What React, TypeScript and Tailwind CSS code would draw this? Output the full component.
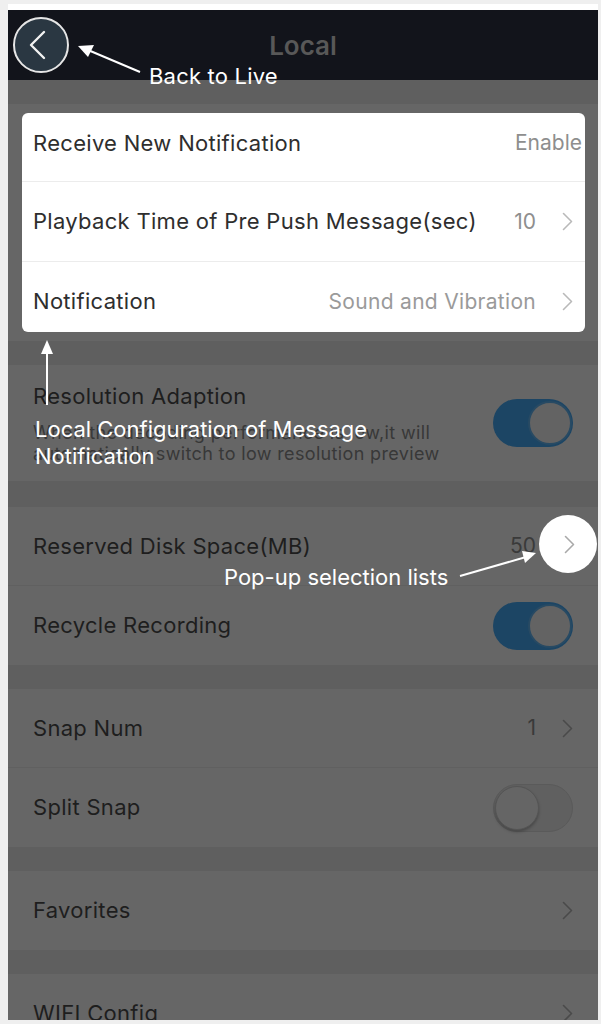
import React from "react";

const Chevron = ({ color = "#4a4a4a" }: { color?: string }) => (
  <svg width="11" height="19" viewBox="0 0 11 19" fill="none">
    <path d="M1.5 1.5 L9.5 9.5 L1.5 17.5" stroke={color} strokeWidth="1.6" strokeLinecap="round" strokeLinejoin="round" />
  </svg>
);

const ToggleOn = () => (
  <div className="relative w-[80px] h-[48px] rounded-full bg-[#1c4564]">
    <div className="absolute right-[1px] top-[2px] w-[44px] h-[44px] rounded-full bg-[#636363] border-[2px] border-[#284a63]" />
  </div>
);

const ToggleOff = () => (
  <div className="relative w-[80px] h-[48px] rounded-full bg-[#606060] border border-[#5a5a5a]">
    <div className="absolute left-[1px] top-[1px] w-[44px] h-[44px] rounded-full bg-[#656565] border border-[#555555] shadow-[0_2px_3px_rgba(0,0,0,0.25)]" />
  </div>
);

const Gap = ({ h = "h-[24px]" }: { h?: string }) => <div className={`${h} bg-[#5f5f5f]`} />;

const Row = ({ children, last }: { children: React.ReactNode; last?: boolean }) => (
  <div className={`h-[79px] bg-[#666666] flex items-center justify-between pl-[25px] pr-[25px] ${last ? "" : "border-b border-[#606060]"}`}>
    {children}
  </div>
);

const Title = ({ children }: { children: React.ReactNode }) => (
  <span className="text-[22px] text-[#1e1e1e] tracking-[0.3px]">{children}</span>
);

export default function App() {
  return (
    <div
      className="w-[601px] h-[1024px] bg-[#efefef] pt-[4px] pl-[8px] pr-[3px] overflow-hidden"
      style={{ fontFamily: "Inter, 'Liberation Sans', sans-serif" }}
    >
      <div className="border-t-[6px] border-white">
        <div className="relative w-[590px] h-[1010px] bg-[#666666] overflow-hidden">
          {/* Header */}
          <div className="h-[70px] bg-[#12141b] flex items-center justify-center">
            <span className="text-[26px] font-semibold text-[#585858]">Local</span>
          </div>
          <Gap />

          {/* Group 1 with highlight card */}
          <div className="bg-[#666666] pl-[14px] pr-[13px] py-[9px]">
            <div className="bg-white rounded-[6px] flex flex-col">
              <div className="h-[69px] flex items-center justify-between pl-[11px] pr-[3px] pb-[8px] border-b border-[#ececec]">
                <span className="text-[22px] text-[#2e2e2e] tracking-[0.3px]">Receive New Notification</span>
                <span className="text-[21px] text-[#8e8e8e]">Enable</span>
              </div>
              <div className="h-[80px] flex items-center justify-between pl-[11px] pr-[12px] border-b border-[#ececec]">
                <span className="text-[22px] text-[#2e2e2e] tracking-[0.3px]">Playback Time of Pre Push Message(sec)</span>
                <div className="flex items-center gap-[26px]">
                  <span className="text-[21px] text-[#8e8e8e]">10</span>
                  <Chevron color="#b9b9b9" />
                </div>
              </div>
              <div className="h-[70px] flex items-center justify-between pl-[11px] pr-[12px] pt-[9px]">
                <span className="text-[22px] text-[#2e2e2e] tracking-[0.3px]">Notification</span>
                <div className="flex items-center gap-[26px]">
                  <span className="text-[21px] text-[#9a9a9a] tracking-[0.3px]">Sound and Vibration</span>
                  <Chevron color="#b9b9b9" />
                </div>
              </div>
            </div>
          </div>
          <Gap />

          {/* Resolution Adaption */}
          <div className="h-[116px] bg-[#666666] flex items-center justify-between pl-[25px] pr-[25px]">
            <div className="flex flex-col -mt-[3px]">
              <Title>Resolution Adaption</Title>
              <span className="mt-[9px] text-[18px] leading-[21px] text-[#383838] tracking-[0.35px]">When the decoding performance is low,it will</span>
              <span className="text-[18px] leading-[21px] text-[#383838] tracking-[0.35px]">automatically switch to low resolution preview</span>
            </div>
            <ToggleOn />
          </div>
          <Gap h="h-[26px]" />

          <Row>
            <Title>Reserved Disk Space(MB)</Title>
            <div className="flex items-center gap-[26px]">
              <span className="text-[21px] text-[#3a3a3a]">50</span>
              <Chevron />
            </div>
          </Row>
          <Row last>
            <Title>Recycle Recording</Title>
            <ToggleOn />
          </Row>
          <Gap />

          <Row>
            <Title>Snap Num</Title>
            <div className="flex items-center gap-[26px]">
              <span className="text-[21px] text-[#3a3a3a]">1</span>
              <Chevron />
            </div>
          </Row>
          <Row last>
            <Title>Split Snap</Title>
            <ToggleOff />
          </Row>
          <Gap />

          <Row last>
            <Title>Favorites</Title>
            <Chevron />
          </Row>
          <Gap />

          <Row last>
            <Title>WIFI Config</Title>
            <Chevron />
          </Row>

          {/* Annotation overlay */}
          <div className="absolute inset-0 pointer-events-none">
            {/* back button */}
            <div className="absolute left-[5px] top-[7px] w-[56px] h-[56px] rounded-full bg-[#2a3742] border-[2px] border-[#e6e6e6] flex items-center justify-center">
              <svg width="20" height="30" viewBox="0 0 20 30" fill="none" className="mr-[6px]">
                <path d="M16 2 L3 15 L16 28" stroke="#f2f2f2" strokeWidth="2.4" strokeLinecap="round" strokeLinejoin="round" />
              </svg>
            </div>

            {/* highlight circle for pop-up */}
            <div className="absolute left-[531px] top-[505px] w-[58px] h-[58px] rounded-full bg-white flex items-center justify-center">
              <div className="ml-[2px]">
                <Chevron color="#a9a9a9" />
              </div>
            </div>

            <svg className="absolute inset-0" width="590" height="1010" viewBox="0 0 590 1010">
              {/* Back arrow */}
              <line x1="132" y1="62" x2="80" y2="40" stroke="#ffffff" strokeWidth="2" />
              <polygon points="70,36 86,35 80,47" fill="#ffffff" />
              {/* Up arrow */}
              <line x1="39" y1="395" x2="39" y2="340" stroke="#ffffff" strokeWidth="2" />
              <polygon points="39,330 33,344 45,344" fill="#ffffff" />
              {/* Pop-up arrow */}
              <line x1="452" y1="566" x2="518" y2="547" stroke="#ffffff" strokeWidth="2" />
              <polygon points="528,543 514,541 517,553" fill="#ffffff" />
            </svg>

            <span className="absolute left-[141px] top-[53px] text-[22px] leading-[26px] text-white whitespace-nowrap tracking-[0.2px]">Back to Live</span>
            <div className="absolute left-[27px] top-[406px] text-[22px] leading-[27px] text-white whitespace-nowrap">
              <div>Local Configuration of Message</div>
              <div>Notification</div>
            </div>
            <span className="absolute left-[216px] top-[554px] text-[22px] leading-[26px] text-white whitespace-nowrap">Pop-up selection lists</span>
          </div>
        </div>
      </div>
    </div>
  );
}
